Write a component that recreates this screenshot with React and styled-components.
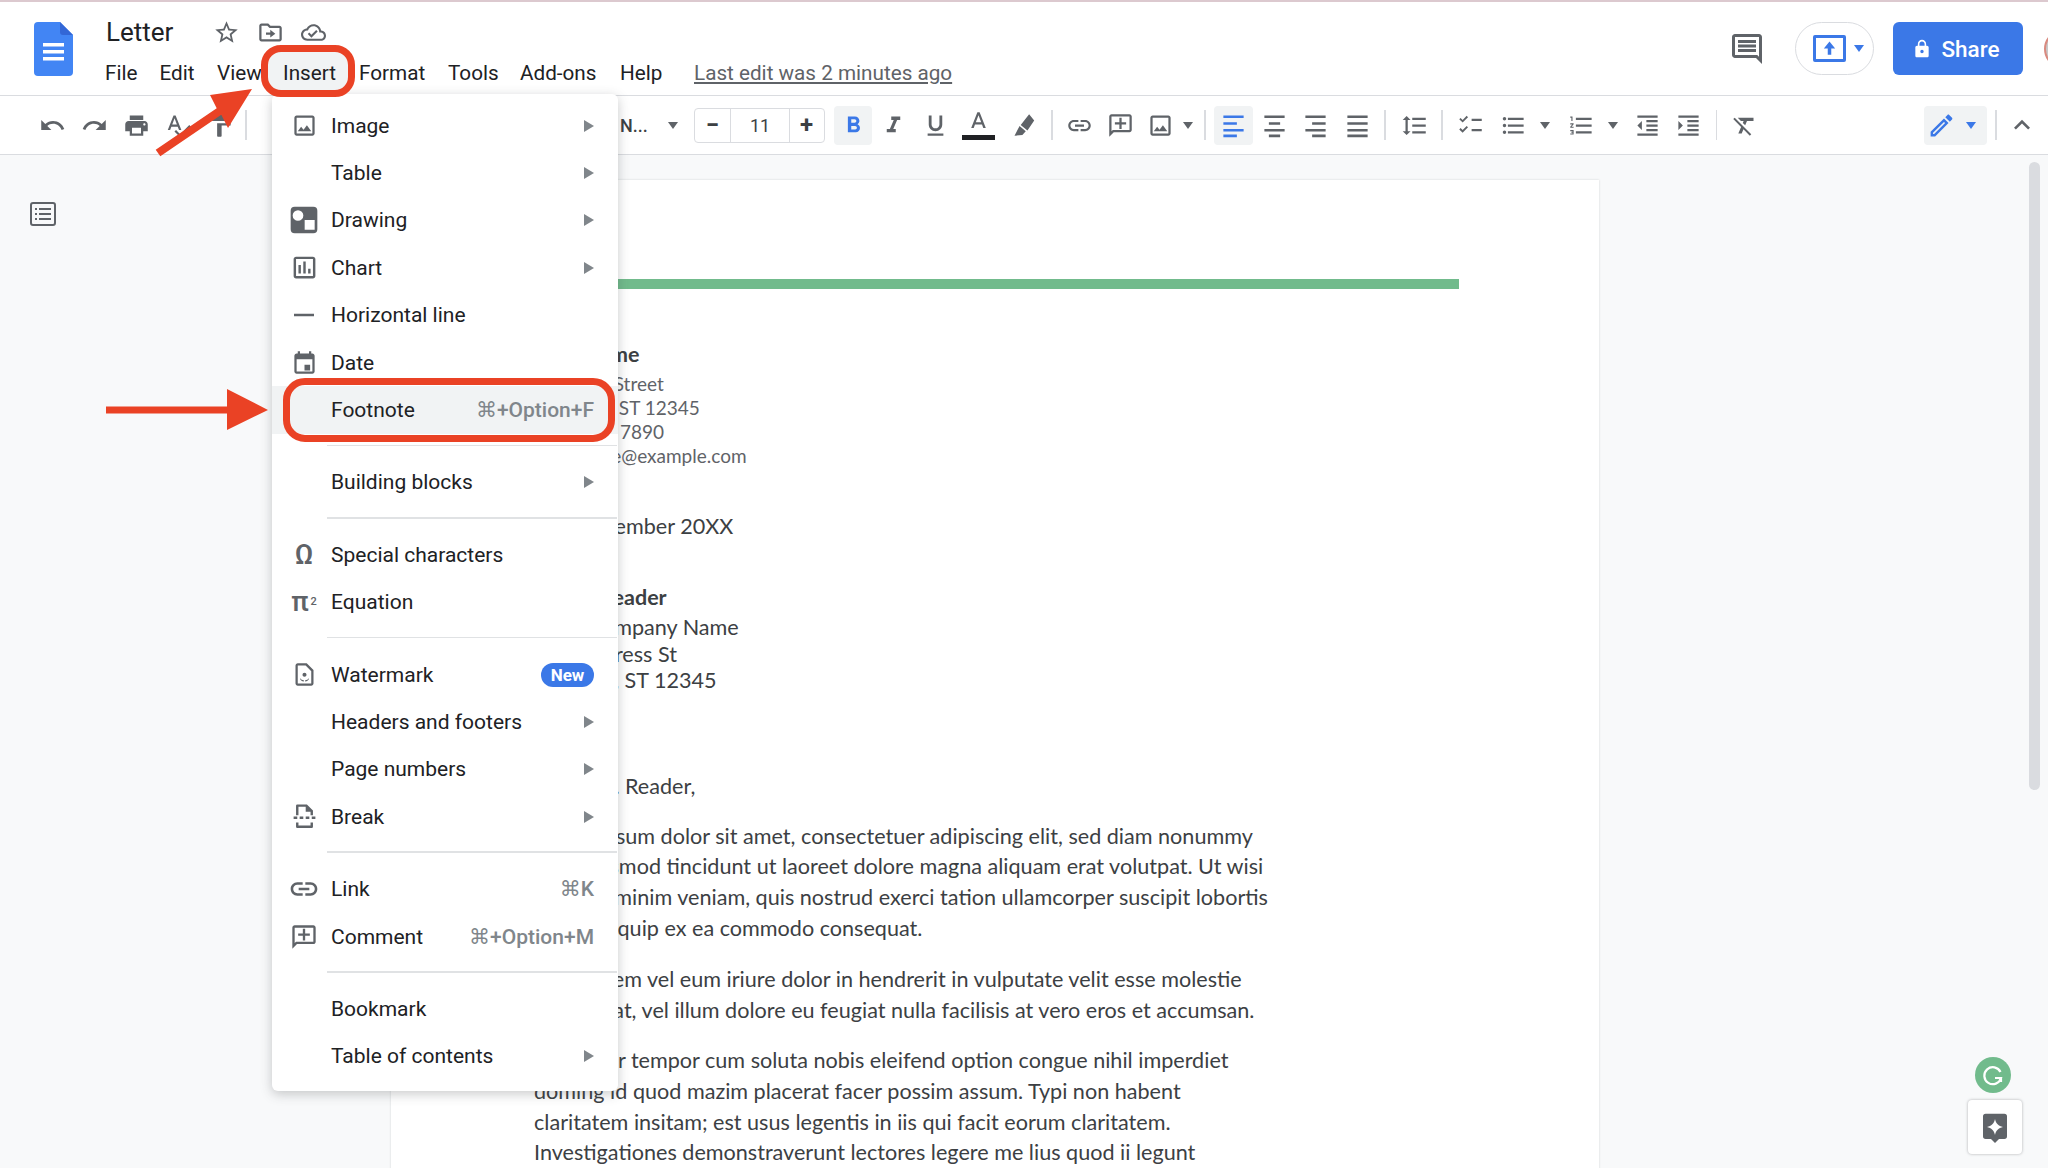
import React from 'react';
import styled, { createGlobalStyle } from 'styled-components';

const P = {
  undo: 'M12.5 8c-2.65 0-5.05.99-6.9 2.6L2 7v9h9l-3.62-3.62c1.39-1.16 3.16-1.88 5.12-1.88 3.54 0 6.55 2.31 7.6 5.5l2.37-.78C21.08 11.03 17.15 8 12.5 8z',
  redo: 'M18.4 10.6C16.55 8.99 14.15 8 11.5 8c-4.65 0-8.58 3.03-9.96 7.22L3.9 16c1.05-3.19 4.05-5.5 7.6-5.5 1.95 0 3.73.72 5.12 1.88L13 16h9V7l-3.6 3.6z',
  print: 'M19 8H5c-1.66 0-3 1.34-3 3v6h4v4h12v-4h4v-6c0-1.66-1.34-3-3-3zm-3 11H8v-5h8v5zm3-7c-.55 0-1-.45-1-1s.45-1 1-1 1 .45 1 1-.45 1-1 1zm-1-9H6v4h12V3z',
  spell: 'M12.45 16h2.09L9.43 3H7.57L2.46 16h2.09l1.12-3h5.64l1.14 3zm-6.02-5L8.5 5.48 10.57 11H6.43zm15.16.59l-8.09 8.09L9.83 16l-1.41 1.41 5.09 5.09L23 13l-1.41-1.41z',
  paint: 'M18 4V3c0-.55-.45-1-1-1H5c-.55 0-1 .45-1 1v4c0 .55.45 1 1 1h12c.55 0 1-.45 1-1V6h1v4H9v11c0 .55.45 1 1 1h2c.55 0 1-.45 1-1v-9h8V4h-3z',
  bold: 'M15.6 10.79c.97-.67 1.65-1.77 1.65-2.79 0-2.26-1.75-4-4-4H7v14h7.04c2.09 0 3.71-1.7 3.71-3.79 0-1.52-.86-2.82-2.15-3.42zM10 6.5h3c.83 0 1.5.67 1.5 1.5s-.67 1.5-1.5 1.5h-3v-3zm3.5 9H10v-3h3.5c.83 0 1.5.67 1.5 1.5s-.67 1.5-1.5 1.5z',
  italic: 'M10 4v3h2.21l-3.42 8H6v3h8v-3h-2.21l3.42-8H18V4z',
  underline: 'M12 17c3.31 0 6-2.69 6-6V3h-2.5v8c0 1.93-1.57 3.5-3.5 3.5S8.5 12.93 8.5 11V3H6v8c0 3.31 2.69 6 6 6zm-7 2v2h14v-2H5z',
  textColor: 'M11 1L5.5 15h2.25l1.12-3h6.25l1.12 3h2.25L13 1h-2zM9.62 10L12 3.67 14.38 10H9.62z',
  highlight: 'M17 2l4.5 5.5-6 9-6-5zM8.5 12.5l5.5 4.6-3 3.4-7 .5z',
  link: 'M3.9 12c0-1.71 1.39-3.1 3.1-3.1h4V7H7c-2.76 0-5 2.24-5 5s2.24 5 5 5h4v-1.9H7c-1.71 0-3.1-1.39-3.1-3.1zM8 13h8v-2H8v2zm9-6h-4v1.9h4c1.71 0 3.1 1.39 3.1 3.1s-1.39 3.1-3.1 3.1h-4V17h4c2.76 0 5-2.24 5-5s-2.24-5-5-5z',
  addComment: 'M20 2H4c-1.1 0-2 .9-2 2v18l4-4h14c1.1 0 2-.9 2-2V4c0-1.1-.9-2-2-2zm0 14H5.17L4 17.17V4h16v12zM13 5h-2v4H7v2h4v4h2v-4h4V9h-4z',
  image: 'M19 5v14H5V5h14m0-2H5c-1.1 0-2 .9-2 2v14c0 1.1.9 2 2 2h14c1.1 0 2-.9 2-2V5c0-1.1-.9-2-2-2zm-4.86 8.86l-3 3.87L9 13.14 6 17h12l-3.86-5.14z',
  alignLeft: 'M3 3h18v2.4H3zM3 9h12v2.4H3zM3 15h18v2.4H3zM3 20h12v2.4H3z',
  alignCenter: 'M3 3h18v2.4H3zM7 9h10v2.4H7zM3 15h18v2.4H3zM7 20h10v2.4H7z',
  alignRight: 'M3 3h18v2.4H3zM9 9h12v2.4H9zM3 15h18v2.4H3zM9 20h12v2.4H9z',
  justify: 'M3 3h18v2.4H3zM3 9h18v2.4H3zM3 15h18v2.4H3zM3 20h18v2.4H3z',
  spacing: 'M6 7h2.5L5 3.5 1.5 7H4v10H1.5L5 20.5 8.5 17H6V7zm4-2v2h12V5H10zm0 14h12v-2H10v2zm0-6h12v-2H10v2z',
  checklist: 'M2 6.5l1.2-1.2L5 7l3.6-3.6L9.8 4.6 5 9.4zM2 15.5l1.2-1.2L5 16l3.6-3.6 1.2 1.2L5 18.4zM13 6h9v2h-9zM13 15h9v2h-9z',
  bullets: 'M4 10.5c-.83 0-1.5.67-1.5 1.5s.67 1.5 1.5 1.5 1.5-.67 1.5-1.5-.67-1.5-1.5-1.5zm0-6c-.83 0-1.5.67-1.5 1.5S3.17 7.5 4 7.5 5.5 6.83 5.5 6 4.83 4.5 4 4.5zm0 12c-.83 0-1.5.68-1.5 1.5s.68 1.5 1.5 1.5 1.5-.68 1.5-1.5-.67-1.5-1.5-1.5zM7 19h14v-2H7v2zm0-6h14v-2H7v2zm0-8v2h14V5H7z',
  numbered: 'M2 17h2v.5H3v1h1v.5H2v1h3v-4H2v1zm1-9h1V4H2v1h1v3zm-1 3h1.8L2 13.1v.9h3v-1H3.2L5 10.9V10H2v1zm5-6v2h14V5H7zm0 14h14v-2H7v2zm0-6h14v-2H7v2z',
  outdent: 'M11 17h10v-2H11v2zm-8-5l4 4V8l-4 4zm0 9h18v-2H3v2zM3 3v2h18V3H3zm8 6h10V7H11v2zm0 4h10v-2H11v2z',
  indent: 'M3 21h18v-2H3v2zM3 8v8l4-4-4-4zm8 9h10v-2H11v2zM3 3v2h18V3H3zm8 6h10V7H11v2zm0 4h10v-2H11v2z',
  clear: 'M3.27 5L2 6.27l6.97 6.97L6.5 19h3l1.57-3.66L16.73 21 18 19.73 3.55 5.27 3.27 5zM6 5v.18L8.82 8h2.4l-.72 1.68 2.1 2.1L14.21 8H20V5H6z',
  pencil: 'M3 17.25V21h3.75L17.81 9.94l-3.75-3.75L3 17.25zM5.92 19H5v-.92l9.06-9.06.92.92L5.92 19zM20.71 5.63l-2.34-2.34c-.39-.39-1.02-.39-1.41 0l-1.83 1.83 3.75 3.75 1.83-1.83c.39-.39.39-1.02 0-1.41z',
  chevron: 'M7.41 15.41L12 10.83l4.59 4.58L18 14l-6-6-6 6z',
  star: 'M22 9.24l-7.19-.62L12 2 9.19 8.63 2 9.24l5.46 4.73L5.82 21 12 17.27 18.18 21l-1.63-7.03L22 9.24zM12 15.4l-3.76 2.27 1-4.28-3.32-2.88 4.38-.38L12 6.1l1.71 4.04 4.38.38-3.32 2.88 1 4.28L12 15.4z',
  move: 'M20 6h-8l-2-2H4c-1.1 0-2 .9-2 2v12c0 1.1.9 2 2 2h16c1.1 0 2-.9 2-2V8c0-1.1-.9-2-2-2zm0 12H4V6h5.17l2 2H20v10zm-8.2-1.5L16.3 13l-4.5-3.5V12H8v2h3.8z',
  cloud: 'M19.35 10.04C18.67 6.59 15.64 4 12 4 9.11 4 6.6 5.64 5.35 8.04 2.34 8.36 0 10.91 0 14c0 3.31 2.69 6 6 6h13c2.76 0 5-2.24 5-5 0-2.64-2.05-4.78-4.65-4.96zM19 18H6c-2.21 0-4-1.79-4-4s1.79-4 4-4h.71C7.37 7.69 9.48 6 12 6c3.04 0 5.5 2.46 5.5 5.5v.5H19c1.66 0 3 1.34 3 3s-1.34 3-3 3zm-9-3.82l-2.09-2.09L6.5 13.5 10 17l6.01-6.01-1.41-1.41z',
  comments: 'M21.99 4c0-1.1-.89-2-1.99-2H4c-1.1 0-2 .9-2 2v12c0 1.1.9 2 2 2h14l4 4-.01-18zM20 4v13.17L18.83 16H4V4h16zM6 12h12v2H6zm0-3h12v2H6zm0-3h12v2H6z',
  lock: 'M18 8h-1V6c0-2.76-2.24-5-5-5S7 3.24 7 6v2H6c-1.1 0-2 .9-2 2v10c0 1.1.9 2 2 2h12c1.1 0 2-.9 2-2V10c0-1.1-.9-2-2-2zm-6 9c-1.1 0-2-.9-2-2s.9-2 2-2 2 .9 2 2-.9 2-2 2zm3.1-9H8.9V6c0-1.71 1.39-3.1 3.1-3.1 1.71 0 3.1 1.39 3.1 3.1v2z',
  drawing: 'M5 2h14a3 3 0 0 1 3 3v14a3 3 0 0 1-3 3H5a3 3 0 0 1-3-3V5a3 3 0 0 1 3-3zm2.5 2.6a4 4 0 1 0 0 8 4 4 0 0 0 0-8zM12.5 12v7.4H20V12z',
  chart: 'M19 3H5c-1.1 0-2 .9-2 2v14c0 1.1.9 2 2 2h14c1.1 0 2-.9 2-2V5c0-1.1-.9-2-2-2zm0 16H5V5h14v14zM7 10h2v7H7zm4-3h2v10h-2zm4 6h2v4h-2z',
  line: 'M4 11h16v2H4z',
  date: 'M19 4h-1V2h-2v2H8V2H6v2H5c-1.1 0-2 .9-2 2v14c0 1.1.9 2 2 2h14c1.1 0 2-.9 2-2V6c0-1.1-.9-2-2-2zm0 16H5V9h14v11zm-2-6h-5v5h5v-5z',
  watermark: 'M14 2H6c-1.1 0-2 .9-2 2v16c0 1.1.9 2 2 2h12c1.1 0 2-.9 2-2V8zm4 18H6V4h7l5 5zM12 10.5a1.8 1.8 0 0 0-1.8 1.8c0 1 .8 1.8 1.8 1.8s1.8-.8 1.8-1.8-.8-1.8-1.8-1.8zM8 15c0 1.9 1.7 3.2 3.4 3.2v-1.2C10 17 9 16.2 8 15zm8 0c-1 1.2-2 2-3.4 2v1.2C14.3 18.2 16 16.9 16 15z',
  pageBreak: 'M6 2h8l5 5v4h-2V8h-4V4H7v7H5V3a1 1 0 0 1 1-1zM3 12h3v2H3zM8 12h3v2H8zM13 12h3v2h-3zM18 12h3v2h-3zM5 17h2v2.5h10V17h2v3.5a1 1 0 0 1-1 1H6a1 1 0 0 1-1-1z',
  explore: 'M12 6c.6 3.3 2.7 5.4 6 6-3.3.6-5.4 2.7-6 6-.6-3.3-2.7-5.4-6-6 3.3-.6 5.4-2.7 6-6z',
};

const Global = createGlobalStyle`
  html, body { margin: 0; padding: 0; width: 2048px; height: 1168px; overflow: hidden; background: #fff; }
  *, *::before, *::after { box-sizing: border-box; }
  body { font-family: Roboto, "DejaVu Sans", sans-serif; color: #202124; }
`;

const Screen = styled.div`
  position: relative;
  width: 2048px;
  height: 1168px;
  overflow: hidden;
  display: flex;
  flex-direction: column;
  border-top: 2px solid #dcc9cf;
`;

const Glyph = styled.svg`
  width: ${(p) => p.$size || 27}px;
  height: ${(p) => p.$size || 27}px;
  fill: ${(p) => p.$color || '#5f6368'};
  flex-shrink: 0;
  display: block;
`;

const Icon = ({ d, size, color }) => (
  <Glyph viewBox="0 0 24 24" $size={size} $color={color}>
    <path d={d} fillRule="evenodd" />
  </Glyph>
);

/* header */
const Header = styled.header`
  height: 94px;
  flex-shrink: 0;
  display: flex;
  align-items: flex-start;
  border-bottom: 1.5px solid #dadce0;
`;

const Logo = styled.svg`
  width: 39px;
  height: 54px;
  margin: 20px 33px 0 34px;
  flex-shrink: 0;
`;

const TitleBlock = styled.div`
  display: flex;
  flex-direction: column;
`;

const TitleRow = styled.div`
  display: flex;
  align-items: center;
  height: 34px;
  margin-top: 13px;
  gap: 17px;
`;

const Title = styled.div`
  width: 89.5px;
  font-size: 26px;
  line-height: 34px;
  color: #202124;
`;

const MenuBar = styled.nav`
  display: flex;
  margin-top: 7px;
  height: 34px;
  align-items: center;
  margin-left: -1px;
`;

const MenuItem = styled.div`
  flex: 0 0 ${(p) => p.$w}px;
  font-size: 20.7px;
  line-height: 34px;
  color: #202124;
  position: relative;
  ${(p) => p.$active && `
    z-index: 20;
    &::before {
      content: '';
      position: absolute;
      left: -22px;
      top: -11px;
      width: 94px;
      height: 52px;
      border: 7px solid #ea4225;
      border-radius: 20px;
      background: #f1f3f4;
      z-index: -1;
    }
  `}
`;

const LastEdit = styled.a`
  font-size: 20.7px;
  line-height: 34px;
  color: #5f6368;
  text-decoration: underline;
  white-space: nowrap;
`;

const HeaderRight = styled.div`
  margin-left: auto;
  display: flex;
  align-items: center;
  height: 53px;
  margin-top: 20px;
  flex-shrink: 0;
  margin-right: -36px;
`;

const CommentsButton = styled.div`
  margin-right: 30px;
`;

const PublishPill = styled.div`
  width: 79px;
  height: 53px;
  border: 1.5px solid #dadce0;
  border-radius: 27px;
  display: flex;
  align-items: center;
  padding-left: 17px;
  gap: 8px;
`;

const UploadBox = styled.div`
  width: 33px;
  height: 27px;
  border: 3px solid #3b78e7;
  border-radius: 2px;
  display: flex;
  align-items: center;
  justify-content: center;
`;

const ShareButton = styled.button`
  width: 130px;
  height: 53px;
  margin-left: 19px;
  padding: 0 4px 0 0;
  border: 0;
  border-radius: 6px;
  background: #3b78e7;
  color: #fff;
  font: 500 22.5px Roboto, sans-serif;
  display: flex;
  align-items: center;
  justify-content: center;
  gap: 9px;
`;

const Avatar = styled.div`
  width: 40px;
  height: 40px;
  margin-left: 21px;
  border-radius: 50%;
  border: 2px solid #d98a80;
  background: #c9c9c9;
`;

/* toolbar */
const Toolbar = styled.div`
  height: 59px;
  flex-shrink: 0;
  display: flex;
  align-items: center;
  padding-left: 31px;
  background: #fff;
  border-bottom: 1.5px solid #dadce0;
`;

const ToolSlot = styled.div`
  flex: 0 0 ${(p) => p.$w}px;
  height: 39px;
  display: flex;
  align-items: center;
  justify-content: center;
  padding-right: ${(p) => p.$pr || 0}px;
  border-radius: 4px;
  background: ${(p) => (p.$on ? '#f1f3f4' : 'transparent')};
  gap: ${(p) => p.$gap || 0}px;
`;

const TextColorMark = styled.div`
  display: flex;
  flex-direction: column;
  align-items: center;
`;

const ColorBar = styled.div`
  width: 33px;
  height: 5px;
  margin-top: -3px;
  background: #202124;
`;

const Caret = styled.span`
  width: 0;
  height: 0;
  border-left: 5.5px solid transparent;
  border-right: 5.5px solid transparent;
  border-top: 7px solid ${(p) => p.$color || '#5f6368'};
  flex-shrink: 0;
`;

const Divider = styled.div`
  width: 1.5px;
  height: 30px;
  background: #dadce0;
`;

const Gap = styled.div`
  flex: 0 0 ${(p) => p.$w}px;
`;

const FontName = styled.div`
  flex: 0 0 43px;
  font-size: 18px;
  font-weight: 500;
  color: #3c4043;
`;

const SizeBox = styled.div`
  flex: 0 0 131px;
  height: 35px;
  margin-left: 11px;
  margin-right: 9px;
  display: flex;
  border: 1.5px solid #dadce0;
  border-radius: 4px;
`;

const SizeButton = styled.div`
  display: flex;
  align-items: center;
  justify-content: center;
  width: ${(p) => p.$w}px;
  flex-shrink: 0;
  font-size: ${(p) => (p.$big ? 24 : 18)}px;
  font-weight: ${(p) => (p.$big ? 700 : 400)};
  color: #3c4043;
  border-left: ${(p) => (p.$line ? '1.5px solid #dadce0' : '0')};
  border-right: ${(p) => (p.$line ? '1.5px solid #dadce0' : '0')};
`;

/* canvas */
const Canvas = styled.main`
  flex: 1;
  min-height: 0;
  display: flex;
  background: #f8f9fa;
  position: relative;
`;

const SidePanel = styled.aside`
  flex: 0 0 391px;
  padding: 44px 0 0 28px;
`;

const OutlineIcon = styled.svg`
  width: 30px;
  height: 30px;
  display: block;
`;

const Sheet = styled.article`
  flex: 0 0 1208px;
  margin-top: 25px;
  padding: 99px 140px 0 143px;
  background: #fff;
  box-shadow: 0 0 2px rgba(60, 64, 67, 0.2);
  font-family: Lato, "Open Sans", sans-serif;
  height: 1100px;
`;

const GreenRule = styled.div`
  height: 10px;
  width: 925px;
  background: #71bb8c;
  margin-bottom: 53px;
`;

const Block = styled.div`
  margin-top: ${(p) => p.$top || 0}px;
  font-size: ${(p) => p.$size || 21.6}px;
  line-height: ${(p) => p.$lh}px;
  color: ${(p) => p.$color || '#3c4043'};
  font-weight: ${(p) => (p.$bold ? 700 : 400)};
  white-space: nowrap;
`;

const Scrollbar = styled.div`
  position: absolute;
  right: 8px;
  top: 7px;
  width: 11px;
  height: 628px;
  border-radius: 6px;
  background: #dadce0;
`;

const GrammarlyBadge = styled.div`
  position: absolute;
  left: 1975px;
  top: 902px;
  width: 36px;
  height: 36px;
  border-radius: 50%;
  background: #71bb8c;
  display: flex;
  align-items: center;
  justify-content: center;
`;

const ExploreButton = styled.div`
  position: absolute;
  left: 1968px;
  top: 945px;
  width: 54px;
  height: 54px;
  border-radius: 4px;
  background: #fff;
  box-shadow: 0 0 3px rgba(60, 64, 67, 0.4);
  display: flex;
  align-items: center;
  justify-content: center;
`;

/* insert menu */
const Menu = styled.div`
  position: absolute;
  left: 272px;
  top: 92px;
  width: 346px;
  height: 997px;
  padding: 8px 0 0;
  background: #fff;
  border-radius: 6px;
  box-shadow: 0 3px 12px rgba(60, 64, 67, 0.28);
  z-index: 10;
`;

const Row = styled.div`
  position: relative;
  height: 47.4px;
  display: flex;
  align-items: center;
  padding: 0 24px 0 18px;
  font-size: 21px;
  color: #202124;
  background: ${(p) => (p.$on ? '#f1f3f4' : 'transparent')};
  ${(p) => p.$on && `
    &::after {
      content: '';
      position: absolute;
      left: 11px;
      right: 3px;
      top: -8.5px;
      bottom: -8.5px;
      border: 7px solid #ea4225;
      border-radius: 22px;
    }
  `}
`;

const RowIcon = styled.div`
  flex: 0 0 28px;
  min-width: 0;
  margin-right: 13px;
  display: flex;
  align-items: center;
  justify-content: center;
  font-size: 28px;
  font-weight: 500;
  line-height: 28px;
  color: #5f6368;
  white-space: nowrap;
`;

const Sup = styled.sup`
  font-size: 11px;
  font-weight: 500;
  line-height: 0;
  margin-left: 2px;
`;

const RowLabel = styled.span`
  flex: 1;
  white-space: nowrap;
`;

const Shortcut = styled.span`
  color: #80868b;
  font-weight: 500;
  white-space: nowrap;
`;

const SubArrow = styled.span`
  width: 0;
  height: 0;
  border-top: 6px solid transparent;
  border-bottom: 6px solid transparent;
  border-left: 10px solid #80868b;
`;

const NewBadge = styled.span`
  width: 53px;
  height: 24px;
  border-radius: 12px;
  background: #3b78e7;
  color: #fff;
  font-size: 17px;
  font-weight: 700;
  line-height: 24px;
  text-align: center;
`;

const Separator = styled.div`
  height: 25px;
  margin: 0 1px 0 55px;
  padding-top: 11px;
  &::before {
    content: '';
    display: block;
    height: 1.5px;
    background: #e0e2e4;
  }
`;

const Arrow = styled.svg`
  position: absolute;
  left: 0;
  top: -2px;
  width: 2048px;
  height: 1168px;
  z-index: 30;
  pointer-events: none;
  fill: #ea4225;
`;

const menuBar = [['File', 54.5], ['Edit', 57.5], ['View', 66], ['Insert', 76], ['Format', 89], ['Tools', 72], ['Add-ons', 100], ['Help', 74]];

const menu = [
  { label: 'Image', icon: P.image, sub: true },
  { label: 'Table', sub: true },
  { label: 'Drawing', icon: P.drawing, size: 32, sub: true },
  { label: 'Chart', icon: P.chart, size: 29, sub: true },
  { label: 'Horizontal line', icon: P.line, size: 30 },
  { label: 'Date', icon: P.date },
  { label: 'Footnote', keys: '⌘+Option+F', on: true },
  'sep',
  { label: 'Building blocks', sub: true },
  'sep',
  { label: 'Special characters', glyph: 'Ω' },
  { label: 'Equation', glyph: 'π', sup: '2' },
  'sep',
  { label: 'Watermark', icon: P.watermark },
  { label: 'Headers and footers', sub: true },
  { label: 'Page numbers', sub: true },
  { label: 'Break', icon: P.pageBreak, size: 29, sub: true },
  'sep',
  { label: 'Link', icon: P.link, size: 32, keys: '⌘K' },
  { label: 'Comment', icon: P.addComment, size: 28, keys: '⌘+Option+M' },
  'sep',
  { label: 'Bookmark' },
  { label: 'Table of contents', sub: true },
];

// [width, icon, colour, on]
const tools1 = [[38, P.bold, '#3b78e7', true], [42, P.italic], [42, P.underline]];
const tools2 = [[42, P.link], [40, P.addComment], [40, P.image]];
const tools3 = [[39, P.alignLeft, '#3b78e7', true], [42, P.alignCenter], [41, P.alignRight], [42, P.justify]];

const Tool = ({ t }) => (
  <ToolSlot $w={t[0]} $on={t[3]}>
    <Icon d={t[1]} color={t[2]} />
  </ToolSlot>
);

const DividerSlot = ({ w }) => (
  <ToolSlot $w={w}>
    <Divider />
  </ToolSlot>
);

const CaretSlot = ({ w, color }) => (
  <ToolSlot $w={w}>
    <Caret $color={color} />
  </ToolSlot>
);

const App = () => (
  <Screen>
    <Global />
    <Header>
      <Logo viewBox="0 0 39 54">
        <path d="M4 0h22l13 13v37a4 4 0 0 1-4 4H4a4 4 0 0 1-4-4V4a4 4 0 0 1 4-4z" fill="#4285f4" />
        <path d="M26 0l13 13H29a3 3 0 0 1-3-3z" fill="#3367d6" />
        <path d="M9 21h21v3.5H9zM9 28h21v3.5H9zM9 35h21v3.5H9z" fill="#fff" />
      </Logo>
      <TitleBlock>
        <TitleRow>
          <Title>Letter</Title>
          <Icon d={P.star} />
          <Icon d={P.move} />
          <Icon d={P.cloud} size={25} />
        </TitleRow>
        <MenuBar>
          {menuBar.map(([name, w]) => (
            <MenuItem key={name} $w={w} $active={name === 'Insert'}>{name}</MenuItem>
          ))}
          <LastEdit>Last edit was 2 minutes ago</LastEdit>
        </MenuBar>
      </TitleBlock>
      <HeaderRight>
        <CommentsButton><Icon d={P.comments} size={36} /></CommentsButton>
        <PublishPill>
          <UploadBox><Icon d="M12 4l6.5 8H14v7h-4v-7H5.5z" size={21} color="#3b78e7" /></UploadBox>
          <Caret $color="#3b78e7" />
        </PublishPill>
        <ShareButton><Icon d={P.lock} size={20} color="#fff" />Share</ShareButton>
        <Avatar />
      </HeaderRight>
    </Header>

    <Toolbar>
      <ToolSlot $w={42}><Icon d={P.undo} /></ToolSlot>
      <ToolSlot $w={42}><Icon d={P.redo} /></ToolSlot>
      <ToolSlot $w={42}><Icon d={P.print} /></ToolSlot>
      <ToolSlot $w={42}><Icon d={P.spell} /></ToolSlot>
      <ToolSlot $w={42}><Icon d={P.paint} /></ToolSlot>
      <DividerSlot w={10} />
      <Gap $w={369} />
      <FontName>N...</FontName>
      <CaretSlot w={20} />
      <SizeBox>
        <SizeButton $w={35} $big>−</SizeButton>
        <SizeButton $w={60} $line>11</SizeButton>
        <SizeButton $w={33} $big>+</SizeButton>
      </SizeBox>
      {tools1.map((t, i) => <Tool key={i} t={t} />)}
      <ToolSlot $w={44}>
        <TextColorMark>
          <Icon d={P.textColor} />
          <ColorBar />
        </TextColorMark>
      </ToolSlot>
      <ToolSlot $w={46}><Icon d={P.highlight} /></ToolSlot>
      <DividerSlot w={12} />
      {tools2.map((t, i) => <Tool key={i} t={t} />)}
      <CaretSlot w={16} />
      <DividerSlot w={18} />
      {tools3.map((t, i) => <Tool key={i} t={t} />)}
      <DividerSlot w={14} />
      <ToolSlot $w={44}><Icon d={P.spacing} /></ToolSlot>
      <DividerSlot w={12} />
      <ToolSlot $w={44}><Icon d={P.checklist} /></ToolSlot>
      <ToolSlot $w={42}><Icon d={P.bullets} /></ToolSlot>
      <CaretSlot w={22} />
      <ToolSlot $w={50}><Icon d={P.numbered} /></ToolSlot>
      <CaretSlot w={14} />
      <ToolSlot $w={54}><Icon d={P.outdent} /></ToolSlot>
      <ToolSlot $w={28}><Icon d={P.indent} /></ToolSlot>
      <DividerSlot w={29} />
      <ToolSlot $w={24}><Icon d={P.clear} /></ToolSlot>
      <Gap $w={166} />
      <ToolSlot $w={63} $on $gap={10} $pr={8}>
        <Icon d={P.pencil} color="#3b78e7" size={29} />
        <Caret $color="#3b78e7" />
      </ToolSlot>
      <DividerSlot w={18} />
      <ToolSlot $w={34}><Icon d={P.chevron} size={32} /></ToolSlot>
    </Toolbar>

    <Canvas>
      <SidePanel>
        <OutlineIcon viewBox="0 0 30 30" fill="none" stroke="#5f6368" strokeWidth="2">
          <rect x="3" y="4" width="24" height="22" rx="2" />
          <path d="M7 10h2M11 10h12M7 15h2M11 15h12M7 20h2M11 20h12" />
        </OutlineIcon>
      </SidePanel>
      <Sheet>
        <GreenRule />
        <Block $size={21.5} $lh={24} $bold>Your Name</Block>
        <Block $size={19} $lh={24} $top={6} $color="#5f6368">
          <div>123 Your Street</div>
          <div>Your City, ST 12345</div>
          <div>(123) 456 7890</div>
          <div>your.name@example.com</div>
        </Block>
        <Block $lh={30} $top={43}>4th September 20XX</Block>
        <Block $size={21.5} $lh={26} $top={43} $bold>Ronny Reader</Block>
        <Block $lh={26.5} $top={4}>
          <div>CEO, Company Name</div>
          <div>123 Address St</div>
          <div>Any City, ST 12345</div>
        </Block>
        <Block $lh={30} $top={77}>Dear Ms. Reader,</Block>
        <Block $lh={30.7} $top={20}>
          <div>Lorem ipsum dolor sit amet, consectetuer adipiscing elit, sed diam nonummy</div>
          <div>nibh euismod tincidunt ut laoreet dolore magna aliquam erat volutpat. Ut wisi</div>
          <div>enim ad minim veniam, quis nostrud exerci tation ullamcorper suscipit lobortis</div>
          <div>nisl ut aliquip ex ea commodo consequat.</div>
        </Block>
        <Block $lh={30.7} $top={20.5}>
          <div>Duis autem vel eum iriure dolor in hendrerit in vulputate velit esse molestie</div>
          <div>consequat, vel illum dolore eu feugiat nulla facilisis at vero eros et accumsan.</div>
        </Block>
        <Block $lh={30.7} $top={20}>
          <div>Nam liber tempor cum soluta nobis eleifend option congue nihil imperdiet</div>
          <div>doming id quod mazim placerat facer possim assum. Typi non habent</div>
          <div>claritatem insitam; est usus legentis in iis qui facit eorum claritatem.</div>
          <div>Investigationes demonstraverunt lectores legere me lius quod ii legunt</div>
        </Block>
      </Sheet>
      <Scrollbar />
      <GrammarlyBadge>
        <svg width="24" height="24" viewBox="0 0 24 24" fill="none" stroke="#fff" strokeWidth="2.2">
          <path d="M19.5 9A8.5 8.5 0 1 0 20 15h-6M20 15v4" />
        </svg>
      </GrammarlyBadge>
      <ExploreButton>
        <Glyph viewBox="0 0 24 24" $size={32}>
          <path d="M5 2h14a2 2 0 0 1 2 2v15a2 2 0 0 1-2 2h-4l-3 3-3-3H5a2 2 0 0 1-2-2V4a2 2 0 0 1 2-2z" />
          <path d={P.explore} fill="#fff" />
        </Glyph>
      </ExploreButton>
    </Canvas>

    <Menu>
      {menu.map((m, i) =>
        m === 'sep' ? (
          <Separator key={i} />
        ) : (
          <Row key={i} $on={m.on}>
            <RowIcon>
              {m.icon && <Icon d={m.icon} size={m.size} />}
              {m.glyph}
              {m.sup && <Sup>{m.sup}</Sup>}
            </RowIcon>
            <RowLabel>{m.label}</RowLabel>
            {m.keys && <Shortcut>{m.keys}</Shortcut>}
            {m.label === 'Watermark' && <NewBadge>New</NewBadge>}
            {m.sub && <SubArrow />}
          </Row>
        )
      )}
    </Menu>

    <Arrow viewBox="0 0 2048 1168">
      <polygon points="155.7,149.7 216.7,108.2 210,95 252,89 228,128 221.3,114.8 160.3,156.3" />
      <polygon points="106,406.5 227,406.5 227,389 268,410 227,430 227,413.5 106,413.5" />
    </Arrow>
  </Screen>
);

export default App;
